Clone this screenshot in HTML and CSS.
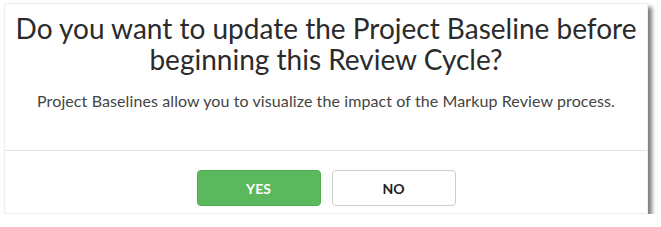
FILE: index.html
```html
<!DOCTYPE html>
<html lang="en">
<head>
    <meta charset="UTF-8">
    <title>Update Baseline</title>
    <link rel="stylesheet" href="styles.css">
</head>
<body>
    <div class="modal">
        <div class="modal-body">
            <h2 class="title">Do you want to update the Project Baseline before<br>beginning this Review Cycle?</h2>
            <p class="desc">Project Baselines allow you to visualize the impact of the Markup Review process.</p>
        </div>
        <div class="modal-footer">
            <button class="btn btn-yes">YES</button>
            <button class="btn btn-no">NO</button>
        </div>
    </div>
</body>
</html>
```

FILE: styles.css
```css
body {
    margin: 0;
    background: #ffffff;
    font-family: Lato, "Liberation Sans", sans-serif;
    color: #333333;
}

.modal {
    width: 644px;
    margin: 3px 0 0 4px;
    background: #ffffff;
    border: 1px solid #eeeeee;
    box-sizing: border-box;
    box-shadow: 4px 4px 4px rgba(0, 0, 0, 0.5);
}

.modal-body {
    height: 147px;
    box-sizing: border-box;
    padding-top: 9px;
    text-align: center;
    border-bottom: 1px solid #e3e3e3;
}

.title {
    margin: 0;
    font-size: 28px;
    font-weight: normal;
    line-height: 31px;
    color: #2b2b2b;
}

.desc {
    margin: 16px 0 0;
    font-size: 16px;
    letter-spacing: 0.1px;
    color: #444444;
}

.modal-footer {
    display: flex;
    justify-content: center;
    gap: 11px;
    padding: 19px 0 7px;
}

.btn {
    width: 124px;
    height: 36px;
    border-radius: 4px;
    font-family: Lato, "Liberation Sans", sans-serif;
    font-size: 14px;
    font-weight: bold;
    cursor: pointer;
}

.btn-yes {
    background: #5cb85c;
    border: 1px solid #4cae4c;
    color: #ffffff;
}

.btn-no {
    background: #ffffff;
    border: 1px solid #cccccc;
    color: #222222;
}
```
